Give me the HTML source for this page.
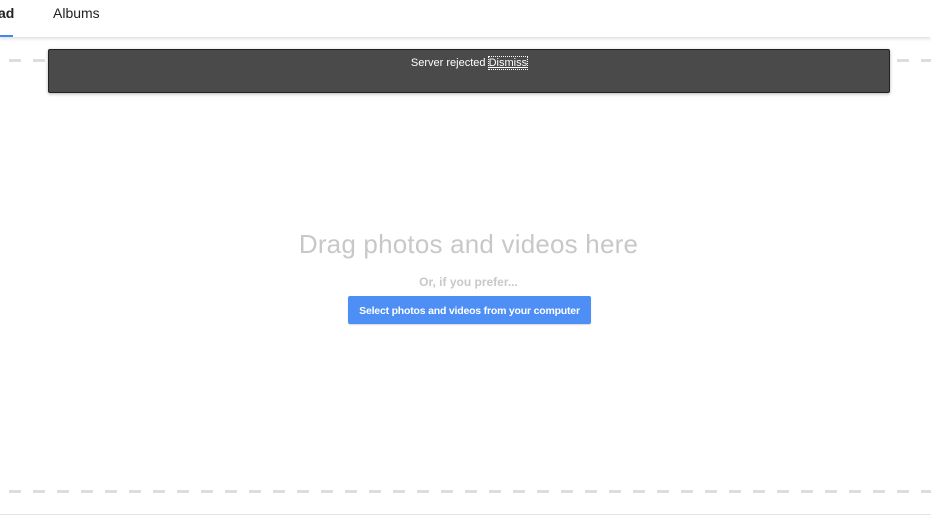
<!DOCTYPE html>
<html><head><meta charset="utf-8"><style>
html,body{margin:0;padding:0;width:931px;height:528px;overflow:hidden;background:#fff;font-family:"Liberation Sans",Arial,sans-serif;position:relative}
.hdr{position:absolute;left:0;top:0;width:931px;height:37px;background:#fff;box-shadow:0 2px 3px rgba(0,0,0,0.12);z-index:2}
.tab1{position:absolute;left:-2px;top:5px;font-size:14px;font-weight:bold;color:#222}
.tab2{position:absolute;left:53px;top:5px;font-size:14px;color:#222}
.ind{position:absolute;left:0;top:35px;width:13px;height:2px;background:#4285f4}
.dash{position:absolute;left:0;width:931px;height:3px;background:repeating-linear-gradient(to right,transparent 0,transparent 9px,#ddd 9px,#ddd 21px,transparent 21px,transparent 24px)}
.snack{position:absolute;left:48px;top:49px;width:840px;height:42px;background:#4a4a4a;border:1px solid #222;border-radius:2px;box-shadow:0 1px 3px rgba(0,0,0,.3);z-index:3;color:#fff;font-size:11px;text-align:center;line-height:27px}
.snack span{outline:1px dotted #fff;text-decoration:underline}
.h{position:absolute;left:0;width:937px;top:229px;text-align:center;font-size:26px;letter-spacing:0.2px;color:#c8c8c8}
.p{position:absolute;left:0;width:937px;top:275px;text-align:center;font-size:12px;font-weight:bold;color:#c8c8c8}
.btn{position:absolute;left:348px;top:296px;width:243px;height:28px;background:#4d8ff5;border-radius:2px;color:#fff;font-size:10.5px;letter-spacing:-0.2px;font-weight:bold;text-align:center;line-height:30px;box-shadow:0 1px 1px rgba(0,0,0,.15)}
.bl{position:absolute;left:0;top:514px;width:931px;height:1px;background:#e3e3e3}
</style></head><body>
<div class="hdr"><div class="tab1">ad</div><div class="tab2">Albums</div><div class="ind"></div></div>
<div class="dash" style="top:59px"></div>
<div class="snack">Server rejected <span>Dismiss</span></div>
<div class="h">Drag photos and videos here</div>
<div class="p">Or, if you prefer...</div>
<div class="btn">Select photos and videos from your computer</div>
<div class="dash" style="top:490px"></div>
<div class="bl"></div>
</body></html>
